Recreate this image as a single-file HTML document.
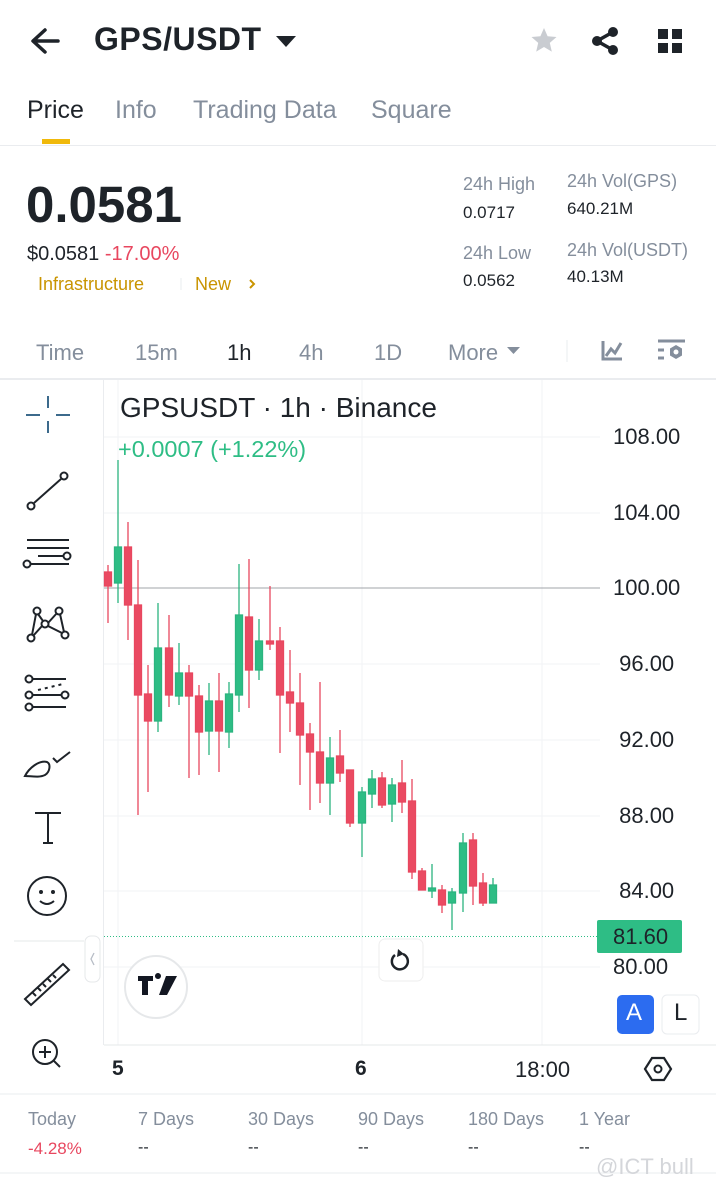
<!DOCTYPE html>
<html><head><meta charset="utf-8"><style>
*{margin:0;padding:0;box-sizing:border-box}
body{width:716px;height:1192px;background:#fff;font-family:"Liberation Sans",sans-serif;position:relative;overflow:hidden;color:#1e2329}
.a{position:absolute;white-space:nowrap}
.g{color:#848e9c}
</style></head><body>
<svg class="a" style="left:0;top:0" width="716" height="1192" viewBox="0 0 716 1192">
<path d="M58 41H34M45 30L33 41L45 52" stroke="#1e2329" stroke-width="3.5" fill="none" stroke-linecap="round" stroke-linejoin="round"/>
<path d="M276 36h20l-10 11z" fill="#1e2329"/>
<path d="M544 28l3.6 8.2 8.9.8-6.7 5.9 2 8.7-7.8-4.6-7.8 4.6 2-8.7-6.7-5.9 8.9-.8z" fill="#c9ccd1"/>
<circle cx="613" cy="32" r="5" fill="#1e2329"/><circle cx="597" cy="41" r="5" fill="#1e2329"/><circle cx="613" cy="50" r="5" fill="#1e2329"/>
<path d="M613 32L597 41L613 50" stroke="#1e2329" stroke-width="3.5" fill="none"/>
<rect x="658" y="29" width="10" height="10" fill="#1e2329"/><rect x="672" y="29" width="10" height="10" fill="#1e2329"/><rect x="658" y="43" width="10" height="10" fill="#1e2329"/><rect x="672" y="43" width="10" height="10" fill="#1e2329"/>
<rect x="42" y="139" width="28" height="5" fill="#f0b90b"/>
<line x1="0" y1="145.5" x2="716" y2="145.5" stroke="#eaecef"/>
<path d="M250 280l4 4-4 4" stroke="#c99400" stroke-width="2" fill="none"/>
<line x1="181" y1="278" x2="181" y2="290" stroke="#eaecef"/>
<path d="M507 347h13l-6.5 7z" fill="#848e9c"/>
<line x1="567" y1="340" x2="567" y2="362" stroke="#eaecef"/>
<path d="M603 341v18h19M606 356l5-7 4 4 6-10" stroke="#848e9c" stroke-width="3" fill="none"/>
<path d="M658 341h27M658 350h6M658 358h6" stroke="#848e9c" stroke-width="3"/>
<path d="M676 345l6 3.5v7l-6 3.5-6-3.5v-7z" fill="#848e9c"/><circle cx="676" cy="352" r="2.5" fill="#fff"/>
<line x1="0" y1="379" x2="716" y2="379" stroke="#eaecef" stroke-width="2"/>
<line x1="103.5" y1="380" x2="103.5" y2="1045" stroke="#eaecef"/>
<g stroke="#f2f3f5">
<line x1="104" y1="437" x2="600" y2="437"/><line x1="104" y1="513" x2="600" y2="513"/><line x1="104" y1="664" x2="600" y2="664"/><line x1="104" y1="740" x2="600" y2="740"/><line x1="104" y1="816" x2="600" y2="816"/><line x1="104" y1="891" x2="600" y2="891"/><line x1="104" y1="967" x2="600" y2="967"/>
<line x1="118" y1="380" x2="118" y2="1045"/><line x1="362" y1="380" x2="362" y2="1045"/><line x1="542" y1="380" x2="542" y2="1045"/>
</g>
<line x1="104" y1="588" x2="600" y2="588" stroke="#a0a4aa"/>
<line x1="104" y1="936.5" x2="600" y2="936.5" stroke="#2ebd85" stroke-dasharray="1 2"/>
<line x1="104" y1="1045" x2="716" y2="1045" stroke="#e6e8ea"/>
<line x1="14" y1="941" x2="84" y2="941" stroke="#e6e8ea"/>
<line x1="0" y1="1094" x2="716" y2="1094" stroke="#eaecef"/>
<line x1="0" y1="1173" x2="716" y2="1173" stroke="#eaecef"/>
<g stroke-width="1.3">
<g stroke="#e8475f" fill="#ea4a62">
<line x1="108" y1="565" x2="108" y2="623"/><rect x="104.5" y="572" width="7" height="14"/>
<line x1="128" y1="522" x2="128" y2="640"/><rect x="124.5" y="547" width="7" height="58"/>
<line x1="138" y1="560" x2="138" y2="815"/><rect x="134.5" y="605" width="7" height="90"/>
<line x1="148" y1="665" x2="148" y2="792"/><rect x="144.5" y="694" width="7" height="27"/>
<line x1="169" y1="615" x2="169" y2="707"/><rect x="165.5" y="648" width="7" height="47"/>
<line x1="189" y1="665" x2="189" y2="778"/><rect x="185.5" y="673" width="7" height="23"/>
<line x1="199" y1="685" x2="199" y2="775"/><rect x="195.5" y="696" width="7" height="36"/>
<line x1="219" y1="673" x2="219" y2="772"/><rect x="215.5" y="701" width="7" height="30"/>
<line x1="249" y1="559" x2="249" y2="708"/><rect x="245.5" y="617" width="7" height="53"/>
<line x1="270" y1="586" x2="270" y2="650"/><rect x="266.5" y="641" width="7" height="3"/>
<line x1="280" y1="627" x2="280" y2="753"/><rect x="276.5" y="641" width="7" height="54"/>
<line x1="290" y1="650" x2="290" y2="732"/><rect x="286.5" y="692" width="7" height="11"/>
<line x1="300" y1="673" x2="300" y2="785"/><rect x="296.5" y="703" width="7" height="32"/>
<line x1="310" y1="723" x2="310" y2="810"/><rect x="306.5" y="734" width="7" height="18"/>
<line x1="320" y1="682" x2="320" y2="803"/><rect x="316.5" y="752" width="7" height="31"/>
<line x1="340" y1="730" x2="340" y2="782"/><rect x="336.5" y="756" width="7" height="17"/>
<line x1="350" y1="770" x2="350" y2="827"/><rect x="346.5" y="770" width="7" height="53"/>
<line x1="382" y1="772" x2="382" y2="808"/><rect x="378.5" y="778" width="7" height="27"/>
<line x1="402" y1="760" x2="402" y2="813"/><rect x="398.5" y="783" width="7" height="19"/>
<line x1="412" y1="779" x2="412" y2="879"/><rect x="408.5" y="801" width="7" height="71"/>
<line x1="422" y1="868" x2="422" y2="890"/><rect x="418.5" y="871" width="7" height="19"/>
<line x1="442" y1="885" x2="442" y2="913"/><rect x="438.5" y="890" width="7" height="15"/>
<line x1="473" y1="833" x2="473" y2="905"/><rect x="469.5" y="840" width="7" height="46"/>
<line x1="483" y1="873" x2="483" y2="906"/><rect x="479.5" y="883" width="7" height="20"/>
</g>
<g stroke="#2bb47f" fill="#2ebd85">
<line x1="118" y1="460" x2="118" y2="603"/><rect x="114.5" y="547" width="7" height="36"/>
<line x1="158" y1="603" x2="158" y2="732"/><rect x="154.5" y="648" width="7" height="73"/>
<line x1="179" y1="643" x2="179" y2="705"/><rect x="175.5" y="673" width="7" height="23"/>
<line x1="209" y1="683" x2="209" y2="755"/><rect x="205.5" y="701" width="7" height="30"/>
<line x1="229" y1="682" x2="229" y2="748"/><rect x="225.5" y="694" width="7" height="38"/>
<line x1="239" y1="564" x2="239" y2="712"/><rect x="235.5" y="615" width="7" height="80"/>
<line x1="259" y1="619" x2="259" y2="680"/><rect x="255.5" y="641" width="7" height="29"/>
<line x1="330" y1="737" x2="330" y2="815"/><rect x="326.5" y="758" width="7" height="25"/>
<line x1="362" y1="787" x2="362" y2="857"/><rect x="358.5" y="792" width="7" height="31"/>
<line x1="372" y1="770" x2="372" y2="808"/><rect x="368.5" y="779" width="7" height="15"/>
<line x1="392" y1="778" x2="392" y2="822"/><rect x="388.5" y="785" width="7" height="19"/>
<line x1="432" y1="864" x2="432" y2="898"/><rect x="428.5" y="888" width="7" height="3"/>
<line x1="452" y1="888" x2="452" y2="930"/><rect x="448.5" y="892" width="7" height="11"/>
<line x1="463" y1="833" x2="463" y2="912"/><rect x="459.5" y="843" width="7" height="50"/>
<line x1="493" y1="878" x2="493" y2="903"/><rect x="489.5" y="885" width="7" height="18"/>
</g></g>
<g stroke="#1e2329" stroke-width="2" fill="none">
<path d="M48 396v12M48 421v12M26 415h14M56 415h14" stroke="#3c6a8c"/>
<circle cx="31" cy="506" r="3.5"/><circle cx="64" cy="476" r="3.5"/><path d="M34 503L61 479"/>
<path d="M27 540h42M27 548h42M38 556h27M30 564h39"/><circle cx="67" cy="556" r="3.5" fill="#fff"/><circle cx="27" cy="564" r="3.5" fill="#fff"/>
<circle cx="37" cy="611" r="3.5"/><circle cx="59" cy="611" r="3.5"/><circle cx="45" cy="624" r="3.5"/><circle cx="31" cy="638" r="3.5"/><circle cx="65" cy="635" r="3.5"/>
<path d="M36 614l-4 21M38 614l5 7M48 623l9-10M60 614l4 18M48 626l14 7M42 626l-9 10"/>
<circle cx="29" cy="679" r="3.5"/><path d="M33 679h33M33 695h29M33 707h33"/><circle cx="29" cy="695" r="3.5"/><circle cx="65" cy="695" r="3.5"/><circle cx="29" cy="707" r="3.5"/><path d="M38 690l25-6" stroke-dasharray="3 4"/>
<path d="M25 776c4-8 14-16 22-14c4 2 3 10-2 13c-6 3-14 1-20 1zM53 758l4 4l13-10"/>
<path d="M35 813h26M48 813v30M43 843h10"/>
<circle cx="47" cy="896" r="19"/><circle cx="41" cy="892" r="1" fill="#1e2329"/><circle cx="53" cy="892" r="1" fill="#1e2329"/><path d="M40 901q7 6 14 0"/>
<path d="M25 999l38-35l6 6l-38 35zM33 993l3 3M38 988l3 3M43 984l3 3M48 979l3 3M53 975l3 3"/>
<circle cx="45" cy="1052" r="12"/><path d="M45 1046v12M39 1052h12M54 1061l6 6"/>
</g>
<rect x="85" y="936" width="15" height="46" rx="6" fill="#fff" stroke="#e6e8ea"/>
<path d="M94 953l-3 6 3 6" stroke="#b7bdc6" fill="none" stroke-width="1.3"/>
<circle cx="156" cy="987" r="31" fill="#fff" stroke="#e6e8ea" stroke-width="2"/>
<path d="M138 976h15v5h-5v14h-6v-14h-4zM155 976a3 3 0 1 1 0 .1zM166 976h11l-10 19h-8z" fill="#131722"/>
<rect x="379" y="939" width="44" height="42" rx="6" fill="#fff" stroke="#eeeeee"/>
<path d="M395 955a8 8 0 1 0 8-1" stroke="#1e2329" stroke-width="2.5" fill="none"/><path d="M398 949l6 5-7 3z" fill="#1e2329"/>
<rect x="597" y="920" width="85" height="33" rx="2" fill="#2ebd85"/>
<rect x="617" y="995" width="37" height="39" rx="5" fill="#2c6cf0"/>
<rect x="662" y="995" width="37" height="39" rx="5" fill="#fff" stroke="#eaecef"/>
<path d="M645 1069l7-11h12l7 11l-7 11h-12z" stroke="#1e2329" stroke-width="2.2" fill="none"/><circle cx="658" cy="1069" r="3.5" stroke="#1e2329" stroke-width="2" fill="none"/>
</svg>
<div class="a" style="left:94px;top:21px;font-size:32px;font-weight:bold;letter-spacing:.5px">GPS/USDT</div>
<div class="a" style="left:27px;top:96px;font-size:25px">Price</div>
<div class="a g" style="left:115px;top:96px;font-size:25px">Info</div>
<div class="a g" style="left:193px;top:96px;font-size:25px">Trading Data</div>
<div class="a g" style="left:371px;top:96px;font-size:25px">Square</div>
<div class="a" style="left:26px;top:175px;font-size:51px;font-weight:bold">0.0581</div>
<div class="a" style="left:27px;top:243px;font-size:20px">$0.0581 <span style="color:#e8475f">-17.00%</span></div>
<div class="a" style="left:38px;top:274px;font-size:18px;color:#c99400">Infrastructure</div>
<div class="a" style="left:195px;top:274px;font-size:18px;color:#c99400">New</div>
<div class="a g" style="left:463px;top:174px;font-size:18px">24h High</div>
<div class="a" style="left:463px;top:203px;font-size:17px">0.0717</div>
<div class="a g" style="left:567px;top:171px;font-size:18px">24h Vol(GPS)</div>
<div class="a" style="left:567px;top:199px;font-size:17px">640.21M</div>
<div class="a g" style="left:463px;top:243px;font-size:18px">24h Low</div>
<div class="a" style="left:463px;top:271px;font-size:17px">0.0562</div>
<div class="a g" style="left:567px;top:240px;font-size:18px">24h Vol(USDT)</div>
<div class="a" style="left:567px;top:267px;font-size:17px">40.13M</div>
<div class="a g" style="left:36px;top:340px;font-size:22px">Time</div>
<div class="a g" style="left:135px;top:340px;font-size:22px">15m</div>
<div class="a" style="left:227px;top:340px;font-size:22px">1h</div>
<div class="a g" style="left:299px;top:340px;font-size:22px">4h</div>
<div class="a g" style="left:374px;top:340px;font-size:22px">1D</div>
<div class="a g" style="left:448px;top:340px;font-size:22px">More</div>
<div class="a" style="left:120px;top:392px;font-size:28px">GPSUSDT · 1h · Binance</div>
<div class="a" style="left:118px;top:436px;font-size:23.5px;color:#2ebd85">+0.0007 (+1.22%)</div>
<div class="a" style="left:613px;top:424px;font-size:22px">108.00</div>
<div class="a" style="left:613px;top:500px;font-size:22px">104.00</div>
<div class="a" style="left:613px;top:575px;font-size:22px">100.00</div>
<div class="a" style="left:613px;top:651px;font-size:22px">&nbsp;96.00</div>
<div class="a" style="left:613px;top:727px;font-size:22px">&nbsp;92.00</div>
<div class="a" style="left:613px;top:803px;font-size:22px">&nbsp;88.00</div>
<div class="a" style="left:613px;top:878px;font-size:22px">&nbsp;84.00</div>
<div class="a" style="left:613px;top:924px;font-size:22px">81.60</div>
<div class="a" style="left:613px;top:954px;font-size:22px">80.00</div>
<div class="a" style="left:626px;top:999px;font-size:24px;color:#fff">A</div>
<div class="a" style="left:674px;top:999px;font-size:24px">L</div>
<div class="a" style="left:112px;top:1057px;font-size:21px;font-weight:bold">5</div>
<div class="a" style="left:355px;top:1057px;font-size:21px;font-weight:bold">6</div>
<div class="a" style="left:515px;top:1057px;font-size:22px">18:00</div>
<div class="a g" style="left:28px;top:1109px;font-size:18px">Today</div>
<div class="a" style="left:28px;top:1139px;font-size:17px;color:#e8475f">-4.28%</div>
<div class="a g" style="left:138px;top:1109px;font-size:18px">7 Days</div>
<div class="a g" style="left:248px;top:1109px;font-size:18px">30 Days</div>
<div class="a g" style="left:358px;top:1109px;font-size:18px">90 Days</div>
<div class="a g" style="left:468px;top:1109px;font-size:18px">180 Days</div>
<div class="a g" style="left:579px;top:1109px;font-size:18px">1 Year</div>
<div class="a" style="left:138px;top:1139px;font-size:16px">--</div>
<div class="a" style="left:248px;top:1139px;font-size:16px">--</div>
<div class="a" style="left:358px;top:1139px;font-size:16px">--</div>
<div class="a" style="left:468px;top:1139px;font-size:16px">--</div>
<div class="a" style="left:579px;top:1139px;font-size:16px">--</div>
<div class="a" style="left:596px;top:1154px;font-size:22px;color:#d4d6da">@ICT bull</div>
</body></html>
